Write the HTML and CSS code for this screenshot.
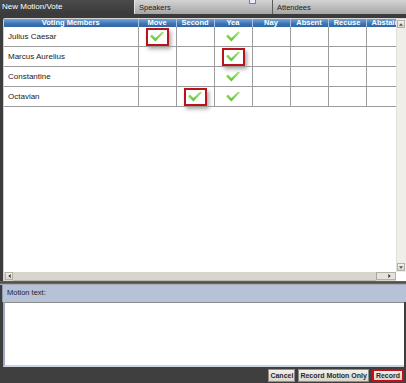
FILE: index.html
```html
<!DOCTYPE html>
<html>
<head>
<meta charset="utf-8">
<link rel="stylesheet" href="styles.css">
</head>
<body>
<svg width="0" height="0" class="defs">
  <defs>
    <linearGradient id="chk" x1="0" y1="0" x2="0" y2="1">
      <stop offset="0" stop-color="#a8ea74"/>
      <stop offset="1" stop-color="#58c032"/>
    </linearGradient>
    <symbol id="check" viewBox="0 0 14 11">
      <polygon points="0,5.2 2,3.6 5.4,7 12.2,0.4 14,1.6 5.4,10.6" fill="url(#chk)"/>
    </symbol>
  </defs>
</svg>
<div class="app">
  <div class="tabs">
    <div class="tab active">New Motion/Vote</div>
    <div class="tab speakers">Speakers<span class="tab-icon"></span></div>
    <div class="tab attendees">Attendees</div>
  </div>
  <div class="gap"></div>
  <div class="grid-panel">
    <div class="grid-main">
      <div class="grid-view">
        <table class="votes">
          <colgroup>
            <col class="c-name"><col class="c-v"><col class="c-v"><col class="c-v"><col class="c-v"><col class="c-v"><col class="c-v"><col class="c-v">
          </colgroup>
          <thead>
            <tr><th>Voting Members</th><th>Move</th><th>Second</th><th>Yea</th><th>Nay</th><th>Absent</th><th>Recuse</th><th>Abstain</th></tr>
          </thead>
          <tbody>
            <tr>
              <td class="name">Julius Caesar</td>
              <td><span class="hl"><svg class="ck"><use href="#check"/></svg></span></td>
              <td></td>
              <td><svg class="ck"><use href="#check"/></svg></td>
              <td></td><td></td><td></td><td></td>
            </tr>
            <tr>
              <td class="name">Marcus Aurelius</td>
              <td></td>
              <td></td>
              <td><span class="hl"><svg class="ck"><use href="#check"/></svg></span></td>
              <td></td><td></td><td></td><td></td>
            </tr>
            <tr>
              <td class="name">Constantine</td>
              <td></td>
              <td></td>
              <td><svg class="ck"><use href="#check"/></svg></td>
              <td></td><td></td><td></td><td></td>
            </tr>
            <tr>
              <td class="name">Octavian</td>
              <td></td>
              <td><span class="hl"><svg class="ck"><use href="#check"/></svg></span></td>
              <td><svg class="ck"><use href="#check"/></svg></td>
              <td></td><td></td><td></td><td></td>
            </tr>
          </tbody>
        </table>
      </div>
      <div class="vscroll">
        <span class="sb-btn"><svg viewBox="0 0 5 3" class="arr"><polygon points="0,3 2.5,0 5,3" fill="#555"/></svg></span>
        <span class="sb-track"></span>
        <span class="sb-btn"><svg viewBox="0 0 5 3" class="arr"><polygon points="0,0 2.5,3 5,0" fill="#555"/></svg></span>
      </div>
    </div>
    <div class="hscroll">
      <span class="sb-btn h"><svg viewBox="0 0 3 5" class="arr-h"><polygon points="3,0 0,2.5 3,5" fill="#333"/></svg></span>
      <span class="sb-track h"></span>
      <span class="sb-btn h wide"><svg viewBox="0 0 3 5" class="arr-h"><polygon points="0,0 3,2.5 0,5" fill="#333"/></svg></span>
      <span class="sb-corner"></span>
    </div>
  </div>
  <div class="divider"></div>
  <div class="motion-label">Motion text:</div>
  <div class="motion-text"></div>
  <div class="footer">
    <button class="btn">Cancel</button>
    <button class="btn">Record Motion Only</button>
    <button class="btn record">Record</button>
  </div>
</div>
</body>
</html>
```
FILE: styles.css
```css
html, body {
  margin: 0;
  padding: 0;
}
body {
  width: 406px;
  height: 383px;
  overflow: hidden;
  background: #3d3d3d;
  font-family: "Liberation Sans", Arial, sans-serif;
}
.defs {
  position: absolute;
}
.app {
  display: flex;
  flex-direction: column;
  height: 383px;
}
.tabs {
  display: flex;
  height: 14px;
  background: #3b3b3b;
}
.tab {
  box-sizing: border-box;
  white-space: nowrap;
}
.tab.active {
  width: 134px;
  color: #fff;
  font-size: 8px;
  line-height: 13px;
  padding-left: 2px;
  background: linear-gradient(#4b4b4b, #3a3a3a);
}
.tab.speakers, .tab.attendees {
  background: linear-gradient(#d4d4d4, #a6a6a6);
  color: #1e1e1e;
  font-size: 7.5px;
  line-height: 15px;
  padding-left: 4px;
}
.tab.speakers {
  width: 138px;
  border-left: 1px solid #e4e4e4;
  position: relative;
}
.tab.attendees {
  flex: 1;
  border-left: 1px solid #5a5a5a;
}
.tab-icon {
  position: absolute;
  left: 114px;
  top: -3px;
  width: 5px;
  height: 5px;
  border: 1px solid #6a7fa8;
  background: #e8eef8;
}
.gap {
  height: 4px;
  background: #3b3b3b;
}
.grid-panel {
  height: 263px;
  box-sizing: border-box;
  margin-left: 3px;
  background: #fff;
  border-left: 1px solid #cfcfcf;
  border-top: 1px solid #d6d6d6;
  border-radius: 2px 0 0 0;
  display: flex;
  flex-direction: column;
}
.grid-main {
  flex: 1;
  display: flex;
  min-height: 0;
}
.grid-view {
  flex: 1;
  overflow: hidden;
}
.votes {
  table-layout: fixed;
  border-collapse: collapse;
  width: 400px;
}
.c-name { width: 134px; }
.c-v { width: 38px; }
.votes th {
  height: 8px;
  padding: 0;
  font-size: 7.5px;
  line-height: 8px;
  font-weight: bold;
  color: #fff;
  text-align: center;
  white-space: nowrap;
  overflow: hidden;
  background: linear-gradient(#76a3d6, #3b74b4 60%, #2e66a6);
  border-left: 1px solid #a9c4e4;
}
.votes th:first-child {
  border-left: none;
}
.votes td {
  height: 19px;
  padding: 0;
  border: 1px solid #9c9c9c;
  border-top: none;
  text-align: center;
  vertical-align: middle;
}
.votes td:first-child {
  border-left: none;
}
.votes td.name {
  text-align: left;
  padding-left: 4px;
  font-size: 8px;
  color: #222;
}
.ck {
  width: 14px;
  height: 11px;
  display: block;
  margin: 0 auto;
}
.hl {
  display: flex;
  align-items: center;
  justify-content: center;
  box-sizing: border-box;
  width: 23px;
  height: 18px;
  margin: 0 auto;
  border: 2px solid #b8141a;
  box-shadow: 2px 3px 4px rgba(0, 0, 0, 0.35);
  background: #fff;
}
.vscroll {
  width: 10px;
  display: flex;
  flex-direction: column;
  background: #efeee8;
  border-left: 1px solid #e2e0d8;
  box-sizing: border-box;
}
.sb-btn {
  display: flex;
  align-items: center;
  justify-content: center;
  width: 8px;
  height: 8px;
  margin: 1px 0 1px 0;
  box-sizing: border-box;
  background: linear-gradient(#f4f3ee, #d7d4ca);
  border: 1px solid #b4b1a6;
}
.sb-track {
  flex: 1;
}
.arr {
  width: 4px;
  height: 3px;
}
.arr-h {
  width: 3px;
  height: 4px;
}
.hscroll {
  height: 9px;
  display: flex;
  align-items: stretch;
  background: #d8d5cc;
}
.sb-btn.h {
  height: 8px;
  margin: 0 0 0 1px;
}
.sb-btn.h.wide {
  width: 20px;
  margin: 0;
  justify-content: flex-end;
  padding-right: 4px;
  background: #e4e2da;
  border-left: 1px solid #aaa79c;
}
.sb-track.h {
  flex: 1;
  border-bottom: 1px solid #bcb9ae;
}
.sb-corner {
  width: 10px;
  background: #fff;
}
.divider {
  height: 4px;
  background: linear-gradient(#6a6a6a 0, #474747 50%, #c8cdd6 100%);
}
.motion-label {
  height: 17px;
  box-sizing: border-box;
  margin-left: 2px;
  background: #b6c2d8;
  border-left: 1px solid #8f9bb0;
  font-size: 7.5px;
  line-height: 16px;
  padding-left: 4px;
  color: #1e1e1e;
}
.motion-text {
  height: 65px;
  box-sizing: border-box;
  margin: 0 2px 0 3px;
  background: #fff;
  border-top: 1px solid #8c8c8c;
  border-left: 2px solid #9eabc2;
  border-bottom: 2px solid #cdd5e3;
}
.footer {
  height: 16px;
  display: flex;
  justify-content: flex-end;
  align-items: center;
  padding-right: 2px;
  gap: 3px;
  background: #3f3f3f;
}
.btn {
  height: 13px;
  padding: 0 1px;
  margin: 0;
  font-family: "Liberation Sans", Arial, sans-serif;
  font-size: 7px;
  font-weight: bold;
  line-height: 11px;
  color: #2a2a2a;
  background: linear-gradient(#f3f1ec, #d9d5ca);
  border: 1px solid #8d8d8d;
  border-radius: 0;
}
.btn.record {
  border: 2px solid #c0101a;
  line-height: 9px;
  padding: 0 2px;
}
```
